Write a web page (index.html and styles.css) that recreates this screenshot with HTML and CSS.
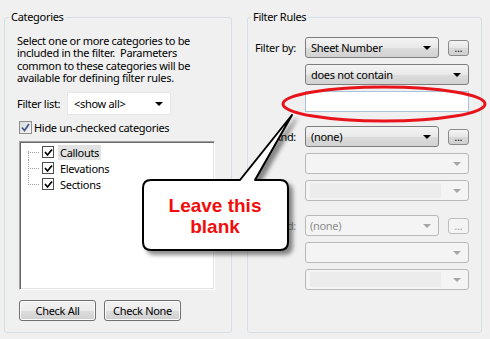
FILE: index.html
```html
<!DOCTYPE html>
<html lang="en">
<head>
    <meta charset="UTF-8">
    <title>Filters</title>
    <link rel="stylesheet" href="styles.css">
</head>
<body>
    <div class="dialog">
        <fieldset class="group categories">
            <legend>Categories</legend>
            <p class="intro">Select one or more categories to be<br>included in the filter.&nbsp; Parameters<br>common to these categories will be<br>available for defining filter rules.</p>
            <div class="filter-list">
                <span class="label">Filter list:</span>
                <div class="combo flat"><span class="value">&lt;show all&gt;</span><i class="arrow"></i></div>
            </div>
            <div class="check-row">
                <span class="vcheck"><svg width="9" height="9" viewBox="0 0 9 9"><path d="M1 4.5 L3.5 7.5 L8 1" fill="none" stroke="#4a5d8e" stroke-width="1.8"/></svg></span>
                <span>Hide un-checked categories</span>
            </div>
            <ul class="tree">
                <li class="first"><span class="guide"></span><span class="box"><svg width="9" height="9" viewBox="0 0 9 9"><path d="M1 4 L3.5 7 L8 1.5" fill="none" stroke="#000" stroke-width="1.7"/></svg></span><span class="name selected">Callouts</span></li>
                <li><span class="guide"></span><span class="box"><svg width="9" height="9" viewBox="0 0 9 9"><path d="M1 4 L3.5 7 L8 1.5" fill="none" stroke="#000" stroke-width="1.7"/></svg></span><span class="name">Elevations</span></li>
                <li class="last"><span class="guide"></span><span class="box"><svg width="9" height="9" viewBox="0 0 9 9"><path d="M1 4 L3.5 7 L8 1.5" fill="none" stroke="#000" stroke-width="1.7"/></svg></span><span class="name">Sections</span></li>
            </ul>
            <div class="buttons">
                <button class="btn">Check All</button>
                <button class="btn">Check None</button>
            </div>
        </fieldset>

        <fieldset class="group rules">
            <legend>Filter Rules</legend>
            <div class="rule-row">
                <span class="label">Filter by:</span>
                <div class="combo"><span class="value">Sheet Number</span><i class="arrow"></i></div>
                <button class="dots">...</button>
            </div>
            <div class="rule-row">
                <span class="label"></span>
                <div class="combo wide"><span class="value">does not contain</span><i class="arrow"></i></div>
            </div>
            <div class="rule-row">
                <span class="label"></span>
                <div class="textbox"></div>
            </div>

            <div class="rule-row group-start">
                <span class="label">And:</span>
                <div class="combo"><span class="value">(none)</span><i class="arrow"></i></div>
                <button class="dots">...</button>
            </div>
            <div class="rule-row">
                <span class="label"></span>
                <div class="combo wide disabled"><span class="value"></span><i class="arrow"></i></div>
            </div>
            <div class="rule-row">
                <span class="label"></span>
                <div class="combo wide disabled"><span class="value field"></span><i class="arrow"></i></div>
            </div>

            <div class="rule-row group-start">
                <span class="label muted">And:</span>
                <div class="combo disabled"><span class="value">(none)</span><i class="arrow"></i></div>
                <button class="dots disabled">...</button>
            </div>
            <div class="rule-row">
                <span class="label"></span>
                <div class="combo wide disabled"><span class="value"></span><i class="arrow"></i></div>
            </div>
            <div class="rule-row">
                <span class="label"></span>
                <div class="combo wide disabled"><span class="value field"></span><i class="arrow"></i></div>
            </div>
        </fieldset>
    </div>

    <!-- annotation drawn over the dialog -->
    <svg class="annotation" width="490" height="339" viewBox="0 0 490 339">
        <defs>
            <filter id="shadow" x="-20%" y="-20%" width="150%" height="150%">
                <feDropShadow dx="4" dy="4" stdDeviation="2" flood-color="#000" flood-opacity="0.45"/>
            </filter>
        </defs>
        <ellipse cx="384" cy="104" rx="101" ry="17" fill="none" stroke="#e8141c" stroke-width="3"/>
        <path d="M151 180 H240 L292 115 L255 180 H280 Q288 180 288 188 V242 Q288 250 280 250 H151 Q143 250 143 242 V188 Q143 180 151 180 Z" fill="#fff" stroke="#000" stroke-width="2" stroke-linejoin="round" filter="url(#shadow)"/>
        <text class="callout-text" x="215" y="212">Leave this</text>
        <text class="callout-text" x="215" y="233">blank</text>
    </svg>
</body>
</html>
```

FILE: styles.css
```css
body {
    margin: 0;
    background: #f0f0f0;
    font-family: "Noto Sans", sans-serif;
    font-size: 11px;
    letter-spacing: -0.3px;
    color: #000;
}

.dialog {
    display: flex;
    gap: 15px;
    padding: 10px 0 0 4px;
}

.group {
    box-sizing: border-box;
    margin: 0;
    height: 323px;
    border: 1px solid #d5dfe5;
    border-radius: 3px;
}
.group legend {
    padding: 0 2px;
    line-height: 14px;
}

.categories {
    width: 228px;
    padding: 11px 0 0 12px;
}
.categories legend {
    margin-left: -8px;
}

.rules {
    width: 235px;
    padding: 13px 0 0 5px;
    display: flex;
    flex-direction: column;
    gap: 6px;
}
.rules legend {
    margin-left: -2px;
}

.intro {
    margin: 0;
    line-height: 12.33px;
}

.filter-list {
    display: flex;
    align-items: center;
    margin-top: 8px;
}
.filter-list .label {
    width: 50px;
}

/* dropdowns */
.combo {
    box-sizing: border-box;
    display: flex;
    align-items: center;
    width: 134px;
    height: 21px;
    padding: 0 7px 0 5px;
    border: 1px solid #7d7d7d;
    border-radius: 3px;
    background: linear-gradient(#f4f4f4, #e9e9e9 50%, #dcdcdc 51%, #d2d2d2);
}
.combo.wide {
    width: 164px;
}
.combo .value {
    flex: 1;
}
.combo .arrow {
    width: 0;
    height: 0;
    border-left: 4px solid transparent;
    border-right: 4px solid transparent;
    border-top: 4px solid #000;
}
.combo.flat {
    width: 104px;
    height: 23px;
    border-color: #e6e6e6;
    border-radius: 0;
    background: #fff;
    padding-left: 6px;
}
.combo.disabled {
    border-color: #b9b9b9;
    background: #f4f4f4;
    color: #8d8d8d;
    padding-left: 4px;
}
.combo.disabled .arrow {
    border-top-color: #a6a6a6;
}
.combo.disabled .field {
    align-self: stretch;
    margin: 2px 12px 2px 0;
    background: #ececec;
}

.check-row {
    display: flex;
    align-items: center;
    gap: 2px;
    margin: 6px 0 0 2px;
    height: 13px;
}
.vcheck {
    box-sizing: border-box;
    display: flex;
    align-items: center;
    justify-content: center;
    width: 13px;
    height: 13px;
    border: 1px solid #8f8f8f;
    background: linear-gradient(135deg, #d9dcdf, #f5f5f5);
}

/* category tree */
.tree {
    box-sizing: border-box;
    width: 196px;
    height: 149px;
    margin: 7px 0 0 2px;
    padding: 2px 0 0 2px;
    list-style: none;
    background: #fff;
    border: 1px solid;
    border-color: #a0a0a0 #fff #fff #a0a0a0;
    box-shadow: inset 1px 1px 0 #696969, inset -1px -1px 0 #e3e3e3;
}
.tree li {
    display: flex;
    align-items: center;
    height: 16px;
}
.guide {
    width: 14px;
    height: 16px;
    margin-left: 6px;
    background:
        repeating-linear-gradient(to right, #a0a0a0 0 1px, transparent 1px 2px) 0 8px / 12px 1px no-repeat,
        repeating-linear-gradient(to bottom, #a0a0a0 0 1px, transparent 1px 2px) 0 0 / 1px 16px no-repeat;
}
.tree li.first .guide {
    background:
        repeating-linear-gradient(to right, #a0a0a0 0 1px, transparent 1px 2px) 0 8px / 12px 1px no-repeat,
        repeating-linear-gradient(to bottom, #a0a0a0 0 1px, transparent 1px 2px) 0 7px / 1px 9px no-repeat;
}
.tree li.last .guide {
    background:
        repeating-linear-gradient(to right, #a0a0a0 0 1px, transparent 1px 2px) 0 8px / 12px 1px no-repeat,
        repeating-linear-gradient(to bottom, #a0a0a0 0 1px, transparent 1px 2px) 0 0 / 1px 9px no-repeat;
}
.box {
    box-sizing: border-box;
    display: flex;
    align-items: center;
    justify-content: center;
    width: 12px;
    height: 12px;
    border: 1px solid #4d4d4d;
    background: #fff;
}
.name {
    margin-left: 4px;
    padding: 0 2px;
    line-height: 15px;
}
.name.selected {
    background: #e2e2e2;
}

.buttons {
    display: flex;
    gap: 8px;
    margin: 10px 0 0 2px;
}
.btn {
    width: 77px;
    height: 21px;
    padding: 0;
    font: inherit;
    letter-spacing: inherit;
    border: 1px solid #707070;
    border-radius: 3px;
    background: linear-gradient(#f2f2f2, #ebebeb 50%, #dddddd 51%, #cfcfcf);
    box-shadow: inset 0 0 0 1px #fbfbfb;
}

/* filter rules */
.rule-row {
    display: flex;
    align-items: center;
    gap: 9px;
    height: 21px;
}
.rule-row.group-start {
    margin-top: 8px;
}
.rule-row .label {
    width: 43px;
    text-align: right;
    white-space: nowrap;
}
.label.muted {
    color: #8d8d8d;
}
.textbox {
    box-sizing: border-box;
    width: 164px;
    height: 21px;
    background: #fff;
    border: 1px solid #a9c3dd;
}
.dots {
    box-sizing: border-box;
    width: 21px;
    height: 16px;
    padding: 0;
    font: inherit;
    font-size: 10px;
    line-height: 12px;
    border: 1px solid #8a8a8a;
    border-radius: 3px;
    background: linear-gradient(#f4f4f4, #e6e6e6 50%, #d9d9d9 51%, #d0d0d0);
}
.dots.disabled {
    border-color: #bdbdbd;
    background: #f4f4f4;
    color: #9a9a9a;
}

.annotation {
    position: absolute;
    top: 0;
    left: 0;
    pointer-events: none;
}
.callout-text {
    font-family: "Liberation Sans", Arial, sans-serif;
    font-weight: bold;
    font-size: 19px;
    letter-spacing: normal;
    fill: #f20d0d;
    text-anchor: middle;
}
```
